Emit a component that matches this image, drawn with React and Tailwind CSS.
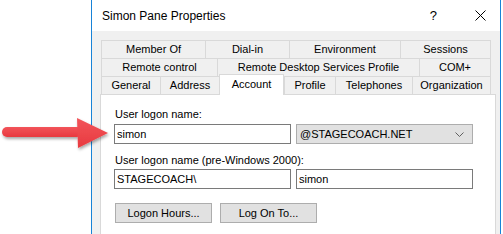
import React from 'react'

const font = { fontFamily: '"Liberation Sans", Arial, sans-serif' }

const rows = [
  [
    { label: 'Member Of', w: 'w-[104px]' },
    { label: 'Dial-in', w: 'w-[84px]' },
    { label: 'Environment', w: 'w-[111px]' },
    { label: 'Sessions', w: 'w-[91px]' },
  ],
  [
    { label: 'Remote control', w: 'w-[116px]' },
    { label: 'Remote Desktop Services Profile', w: 'w-[202px]' },
    { label: 'COM+', w: 'w-[72px]' },
  ],
]

const bottomRow = [
  { label: 'General', w: 'w-[59px]' },
  { label: 'Address', w: 'w-[59px]' },
  { label: 'Account', w: 'w-[65px]', active: true },
  { label: 'Profile', w: 'w-[51px]' },
  { label: 'Telephones', w: 'w-[77px]' },
  { label: 'Organization', w: 'w-[79px]' },
]

function Tab({ tab, last }) {
  if (tab.active) {
    return (
      <div
        className={`${tab.w} relative z-10 -mt-[2px] h-[21px] -mb-px flex items-center justify-center border-x border-t border-[#d9d9d9] bg-white pb-[2px]`}
      >
        {tab.label}
      </div>
    )
  }
  return (
    <div
      className={`${tab.w} h-[18px] flex items-center justify-center border-l border-t border-[#d9d9d9] bg-[#f0f0f0] ${
        last ? 'border-r' : ''
      }`}
    >
      {tab.label}
    </div>
  )
}

function Arrow() {
  return (
    <svg className="absolute left-0 top-[112px]" width="114" height="44" viewBox="0 0 114 44">
      <defs>
        <filter id="shadow" x="-10%" y="-30%" width="120%" height="170%">
          <feDropShadow dx="1" dy="2" stdDeviation="1.5" floodColor="#000" floodOpacity="0.35" />
        </filter>
        <linearGradient id="red" x1="0" y1="0" x2="0" y2="1">
          <stop offset="0" stopColor="#f2545a" />
          <stop offset="1" stopColor="#e83a3f" />
        </linearGradient>
      </defs>
      <g filter="url(#shadow)" fill="url(#red)">
        <rect x="2" y="15" width="80" height="10" rx="5" />
        <polygon points="77,6 108,21 78,36" />
      </g>
    </svg>
  )
}

export default function App() {
  return (
    <div className="relative w-[503px] h-[234px] overflow-hidden bg-white text-[11px] text-black" style={font}>
      <Arrow />

      <div className="ml-[91px] w-[410px] h-full border-x border-[#1883d7] flex flex-col">
        {/* Title bar */}
        <div className="h-[31px] shrink-0 bg-white flex items-center pl-[10px] pr-[14px]">
          <span className="text-[12px] pt-px">Simon Pane Properties</span>
          <span className="ml-auto mr-[38px] text-[13px]">?</span>
          <svg width="11" height="11" viewBox="0 0 11 11">
            <path d="M0.5 0.5 L10.5 10.5 M10.5 0.5 L0.5 10.5" stroke="#000" strokeWidth="1" />
          </svg>
        </div>

        {/* Body */}
        <div className="flex-1 bg-[#f0f0f0] pt-[9px] pl-[8px]">
          <div className="ml-px">
            {rows.map((row, i) => (
              <div key={i} className="flex">
                {row.map((tab, j) => (
                  <Tab key={tab.label} tab={tab} last={j === row.length - 1} />
                ))}
              </div>
            ))}
            <div className="flex items-end">
              {bottomRow.map((tab, j) => (
                <Tab key={tab.label} tab={tab} last={j === bottomRow.length - 1} />
              ))}
            </div>
          </div>

          {/* Panel */}
          <div className="w-[396px] h-[200px] bg-white border border-[#d9d9d9] pt-[13px] pl-[13px]">
            <div className="h-[12px] leading-[12px] pl-px mb-[4px]">User logon name:</div>
            <div className="flex gap-[5px]">
              <div className="w-[177px] h-[20px] border border-[#7a7a7a] bg-white flex items-center pl-[2px]">
                simon
              </div>
              <div className="w-[177px] h-[20px] border border-[#adadad] bg-[#e1e1e1] flex items-center pl-[3px] pr-[8px]">
                <span>@STAGECOACH.NET</span>
                <svg className="ml-auto" width="9" height="5" viewBox="0 0 9 5">
                  <path d="M0.5 0.5 L4.5 4.5 L8.5 0.5" fill="none" stroke="#606060" strokeWidth="1" />
                </svg>
              </div>
            </div>

            <div className="h-[12px] leading-[12px] pl-px mt-[10px] mb-[3px]">
              User logon name (pre-Windows 2000):
            </div>
            <div className="flex gap-[5px]">
              <div className="w-[177px] h-[20px] border border-[#7a7a7a] bg-white flex items-center pl-[2px]">
                STAGECOACH\
              </div>
              <div className="w-[177px] h-[20px] border border-[#7a7a7a] bg-white flex items-center pl-[2px]">
                simon
              </div>
            </div>

            <div className="flex gap-[8px] mt-[14px] pl-px">
              <button className="w-[97px] h-[20px] border border-[#adadad] bg-[#e1e1e1] flex items-center justify-center">
                Logon Hours...
              </button>
              <button className="w-[97px] h-[20px] border border-[#adadad] bg-[#e1e1e1] flex items-center justify-center">
                Log On To...
              </button>
            </div>
          </div>
        </div>
      </div>
    </div>
  )
}
